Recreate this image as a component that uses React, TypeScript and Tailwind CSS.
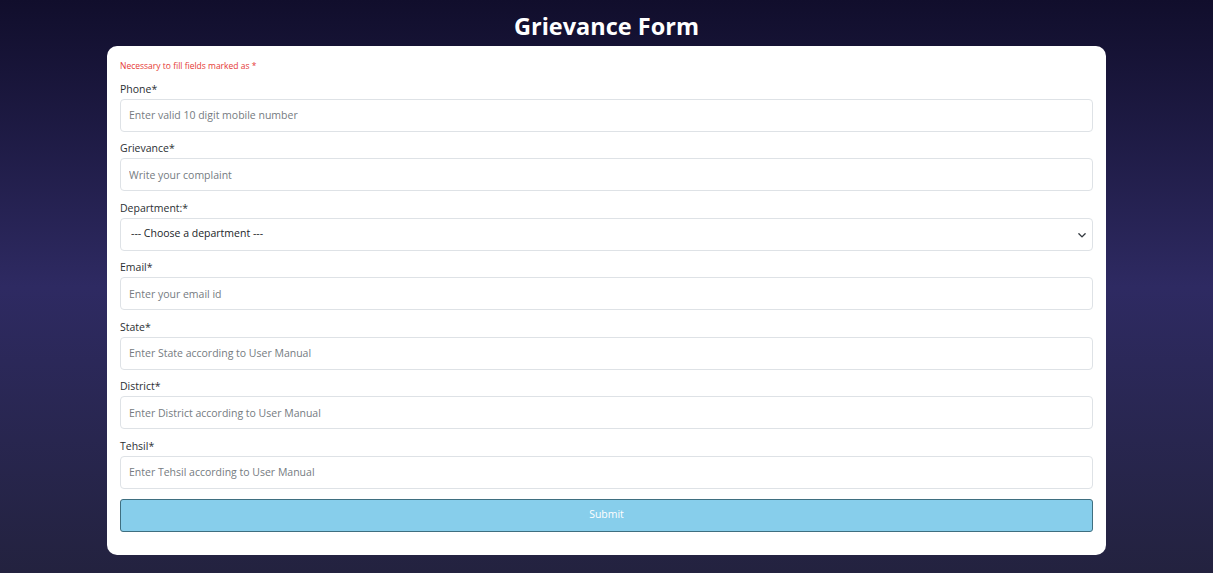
const fields = [
  { label: "Phone*", placeholder: "Enter valid 10 digit mobile number" },
  { label: "Grievance*", placeholder: "Write your complaint" },
  { label: "Department:*", select: true },
  { label: "Email*", placeholder: "Enter your email id" },
  { label: "State*", placeholder: "Enter State according to User Manual" },
  { label: "District*", placeholder: "Enter District according to User Manual" },
  { label: "Tehsil*", placeholder: "Enter Tehsil according to User Manual" },
];

export default function App() {
  return (
    <div
      className="min-h-[573px] bg-gradient-to-b from-[#110e2c] via-[#2e2a62] to-[#23223f] px-[107px] pt-[9px] pb-[19px]"
      style={{ fontFamily: '"Open Sans", "Noto Sans", sans-serif' }}
    >
      <h1 className="text-center text-[23.5px] font-bold leading-[35px] text-white">Grievance Form</h1>
      <form className="mt-[2px] rounded-[10px] bg-white px-[13px] pt-[13px] pb-[23px]">
        <p className="text-[8.5px] leading-[13px] text-[#e53935]">Necessary to fill fields marked as *</p>
        {fields.map((f, i) => (
          <div key={f.label} className={i === 0 ? "mt-[9.5px]" : "mt-[9.5px]"}>
            <label className="block text-[10.5px] leading-[15px] text-[#2b2f33]">{f.label}</label>
            {f.select ? (
              <div className="relative mt-[2px]">
                <select className="h-[33px] w-full appearance-none rounded-[4px] border border-[#dee2e6] bg-white px-[10px] text-[10.5px] text-[#212529] outline-none">
                  <option>--- Choose a department ---</option>
                </select>
                <svg
                  viewBox="0 0 16 16"
                  className="pointer-events-none absolute right-[6px] top-[12px] h-[10px] w-[10px]"
                  fill="none"
                  stroke="#343a40"
                  strokeWidth="2.2"
                  strokeLinecap="round"
                  strokeLinejoin="round"
                >
                  <path d="M3 6l5 5 5-5" />
                </svg>
              </div>
            ) : (
              <input
                placeholder={f.placeholder}
                className="mt-[2px] block h-[33px] w-full rounded-[4px] border border-[#dee2e6] px-[8px] text-[10.5px] text-[#212529] outline-none placeholder:text-[#757b81]"
              />
            )}
          </div>
        ))}
        <button
          type="button"
          className="mt-[10px] h-[33px] w-full rounded-[3px] border border-[#3f6f80] bg-[#87ceeb] text-[10.5px] text-white"
        >
          Submit
        </button>
      </form>
    </div>
  );
}
